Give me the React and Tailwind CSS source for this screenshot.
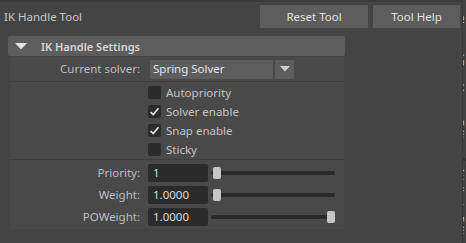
import React from "react";

const font = { fontFamily: '"Noto Sans", "Open Sans", sans-serif' };

function Check({ checked, label }) {
  return (
    <div className="h-[19px] flex items-center">
      <div className="w-[138px]" />
      <div className="w-[13px] h-[13px] bg-[#2b2b2b] rounded-[2px] flex items-center justify-center">
        {checked && (
          <svg width="11" height="11" viewBox="0 0 11 11">
            <path d="M1.5 6 L4.2 8.6 L9.5 2.2" stroke="#e6e6e6" strokeWidth="1.6" fill="none" />
          </svg>
        )}
      </div>
      <span className="ml-[5px] text-[11.5px] text-[#c4c4c4] leading-none">{label}</span>
    </div>
  );
}

function FieldRow({ label, value, pos }) {
  return (
    <div className="h-[22px] flex items-center">
      <div className="w-[130px] text-right text-[11.5px] text-[#bdbdbd] leading-none">{label}</div>
      <div className="ml-[8px] w-[60px] h-[18px] bg-[#2b2b2b] rounded-[2px] flex items-center pl-[5px] text-[11.5px] text-[#dadada] leading-none">
        {value}
      </div>
      <div className="ml-[3px] w-[124px] h-[14px] relative flex items-center">
        <div className="w-full h-[4px] bg-[#2b2b2b] rounded-full" />
        <div
          className="absolute top-[1px] w-[8px] h-[12px] bg-[#c6c6c6] rounded-[2px]"
          style={{ left: pos }}
        />
      </div>
    </div>
  );
}

export default function App() {
  return (
    <div className="w-[466px] h-[243px] bg-[#444444] flex overflow-hidden" style={font}>
      <div className="w-[462px] flex flex-col border-t-2 border-[#3a3a3a]">
        <div className="flex items-center mt-[3px] h-[23px]">
          <div className="flex-1 pl-[4px] text-[11.5px] text-[#c8c8c8] leading-none">IK Handle Tool</div>
          <div className="w-[108px] h-[23px] bg-[#5d5d5d] rounded-[1px] flex items-center justify-center text-[11.5px] text-[#e2e2e2] leading-none">
            Reset Tool
          </div>
          <div className="ml-[5px] w-[87px] h-[23px] bg-[#5d5d5d] rounded-[1px] flex items-center justify-center text-[11.5px] text-[#e2e2e2] leading-none">
            Tool Help
          </div>
          <div className="w-[2px]" />
        </div>

        <div className="ml-[8px] mt-[8px] w-[337px] h-[20px] bg-[#5d5d5d] rounded-[2px] flex items-center">
          <svg width="12" height="7" viewBox="0 0 12 7" className="ml-[7px]">
            <path d="M0 0 L12 0 L6 6.5 Z" fill="#e4e4e4" />
          </svg>
          <span className="ml-[14px] text-[11px] font-semibold text-[#d6d6d6] leading-none">IK Handle Settings</span>
        </div>

        <div className="ml-[10px] mt-[1px] w-[334px] bg-[#494949] flex flex-col">
          <div className="h-[25px] flex items-center border-b border-[#3e3e3e]">
            <div className="w-[130px] text-right text-[11.5px] text-[#bdbdbd] leading-none">Current solver:</div>
            <div className="ml-[10px] w-[123px] h-[19px] bg-[#5d5d5d] rounded-[1px] flex items-center pl-[3px] text-[11.5px] text-[#e4e4e4] leading-none">
              Spring Solver
            </div>
            <div className="ml-[2px] w-[19px] h-[19px] bg-[#5d5d5d] rounded-[1px] flex items-center justify-center">
              <svg width="10" height="6" viewBox="0 0 10 6">
                <path d="M0 0 L10 0 L5 5.5 Z" fill="#d0d0d0" />
              </svg>
            </div>
          </div>
          <div className="pt-[1px] border-b border-[#3e3e3e]">
            <Check label="Autopriority" />
            <Check checked label="Solver enable" />
            <Check checked label="Snap enable" />
            <Check label="Sticky" />
          </div>
          <div className="pt-[2px] pb-[1px]">
            <FieldRow label="Priority:" value="1" pos={2} />
            <FieldRow label="Weight:" value="1.0000" pos={2} />
            <FieldRow label="POWeight:" value="1.0000" pos={116} />
          </div>
        </div>
      </div>
      <div className="w-[4px] flex flex-col border-l border-[#393939] bg-[#424242]">
        <div className="h-[158px] overflow-hidden">
          <div className="[writing-mode:vertical-rl] text-[11px] text-[#b8c4d0] leading-none whitespace-nowrap pt-[14px] -ml-[8px]">
            Channel Box / Layer Editor
          </div>
        </div>
        <div className="h-[3px] bg-[#333333]" />
        <div className="flex-1 overflow-hidden">
          <div className="[writing-mode:vertical-rl] text-[11px] text-[#b8c4d0] leading-none whitespace-nowrap pt-[6px] -ml-[8px]">
            Attribute Editor
          </div>
        </div>
      </div>
    </div>
  );
}
